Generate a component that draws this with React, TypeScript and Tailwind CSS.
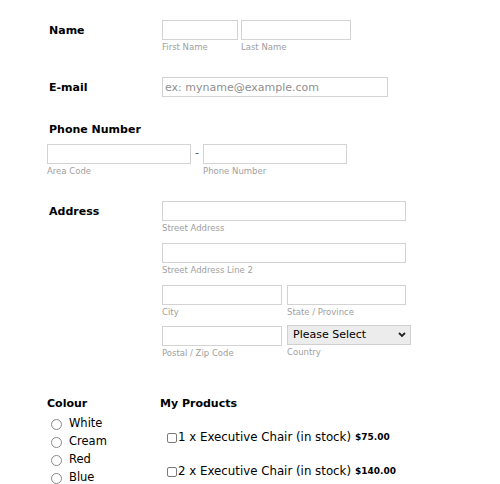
import React from 'react';

const font = { fontFamily: '"DejaVu Sans", Verdana, sans-serif' };

const inputCls = 'block h-[20px] w-full border border-[#d3d3d3] bg-white px-[2px] text-[11px] text-black outline-none';

const Sub: React.FC<{ text: string }> = ({ text }) => (
    <div className="text-[8.5px] leading-[14px] text-[#a0a0a0]">{text}</div>
);

const Field: React.FC<{ sub: string; w: string; placeholder?: string }> = ({ sub, w, placeholder }) => (
    <div className={w}>
        <input type="text" placeholder={placeholder} className={inputCls} />
        <Sub text={sub} />
    </div>
);

const App: React.FC = () => {
    return (
        <div className="w-[500px] h-[484px] overflow-hidden bg-white text-black" style={font}>
            {/* Name */}
            <div className="flex pl-[49px] pt-[20px]">
                <label className="w-[113px] shrink-0 text-[11px] font-bold leading-[21px]">Name</label>
                <div className="flex gap-[3px]">
                    <Field sub="First Name" w="w-[76px]" />
                    <Field sub="Last Name" w="w-[110px]" />
                </div>
            </div>

            {/* E-mail */}
            <div className="flex items-start pl-[49px] mt-[23px]">
                <label className="w-[113px] shrink-0 text-[11px] font-bold leading-[21px]">E-mail</label>
                <input
                    type="text"
                    placeholder="ex: myname@example.com"
                    className="block h-[20px] w-[226px] border border-[#d3d3d3] bg-white px-[2px] text-[11px] outline-none placeholder:text-[#8f8f8f]"
                />
            </div>

            {/* Phone */}
            <div className="mt-[24px] pl-[49px] text-[11px] font-bold leading-[16px]">Phone Number</div>
            <div className="flex pl-[47px] mt-[6px]">
                <Field sub="Area Code" w="w-[144px]" />
                <div className="w-[12px] text-center text-[11px] leading-[18px] text-[#555]">-</div>
                <Field sub="Phone Number" w="w-[144px]" />
            </div>

            {/* Address */}
            <div className="flex pl-[49px] mt-[23px]">
                <label className="w-[113px] shrink-0 text-[11px] font-bold leading-[22px]">Address</label>
                <div className="flex flex-col gap-[8px]">
                    <Field sub="Street Address" w="w-[244px]" />
                    <Field sub="Street Address Line 2" w="w-[244px]" />
                    <div className="flex gap-[5px]">
                        <Field sub="City" w="w-[120px]" />
                        <Field sub="State / Province" w="w-[119px]" />
                    </div>
                    <div className="flex gap-[5px] -mt-[2px]">
                        <Field sub="Postal / Zip Code" w="w-[120px] mt-[1px]" />
                        <div className="w-[124px]">
                            <div className="relative">
                                <select className="block h-[20px] w-full appearance-none border border-[#d0d0d0] bg-[#ececec] pl-[5px] text-[11px] text-black outline-none">
                                    <option>Please Select</option>
                                </select>
                                <svg className="pointer-events-none absolute right-[5px] top-[7px]" width="8" height="6" viewBox="0 0 8 6">
                                    <path d="M1 1l3 3 3-3" fill="none" stroke="#222" strokeWidth="1.8" />
                                </svg>
                            </div>
                            <Sub text="Country" />
                        </div>
                    </div>
                </div>
            </div>

            {/* Colour & Products */}
            <div className="flex mt-[36px]">
                <div className="w-[160px] pl-[47px] shrink-0">
                    <div className="text-[11px] font-bold leading-[16px]">Colour</div>
                    <div className="mt-[3px]">
                        {['White', 'Cream', 'Red', 'Blue'].map((c) => (
                            <label key={c} className="flex items-center h-[18px] text-[11.5px]">
                                <span className="ml-[4px] mr-[7px] h-[11px] w-[11px] rounded-full border border-[#8a8a8a] bg-white" />
                                {c}
                            </label>
                        ))}
                    </div>
                </div>
                <div>
                    <div className="text-[11px] font-bold leading-[16px]">My Products</div>
                    <div className="mt-[17px] flex flex-col gap-[16px]">
                        {[
                            ['1', '$75.00'],
                            ['2', '$140.00'],
                        ].map(([n, price]) => (
                            <label key={n} className="flex items-center h-[18px] pl-[7px] text-[11.8px]">
                                <span className="mr-[1px] h-[10px] w-[10px] rounded-[2px] border border-[#7a7a7a] bg-white" />
                                {n} x Executive Chair (in stock)
                                <span className="ml-[4px] text-[9px] font-bold">{price}</span>
                            </label>
                        ))}
                    </div>
                </div>
            </div>
        </div>
    );
};

export default App;
